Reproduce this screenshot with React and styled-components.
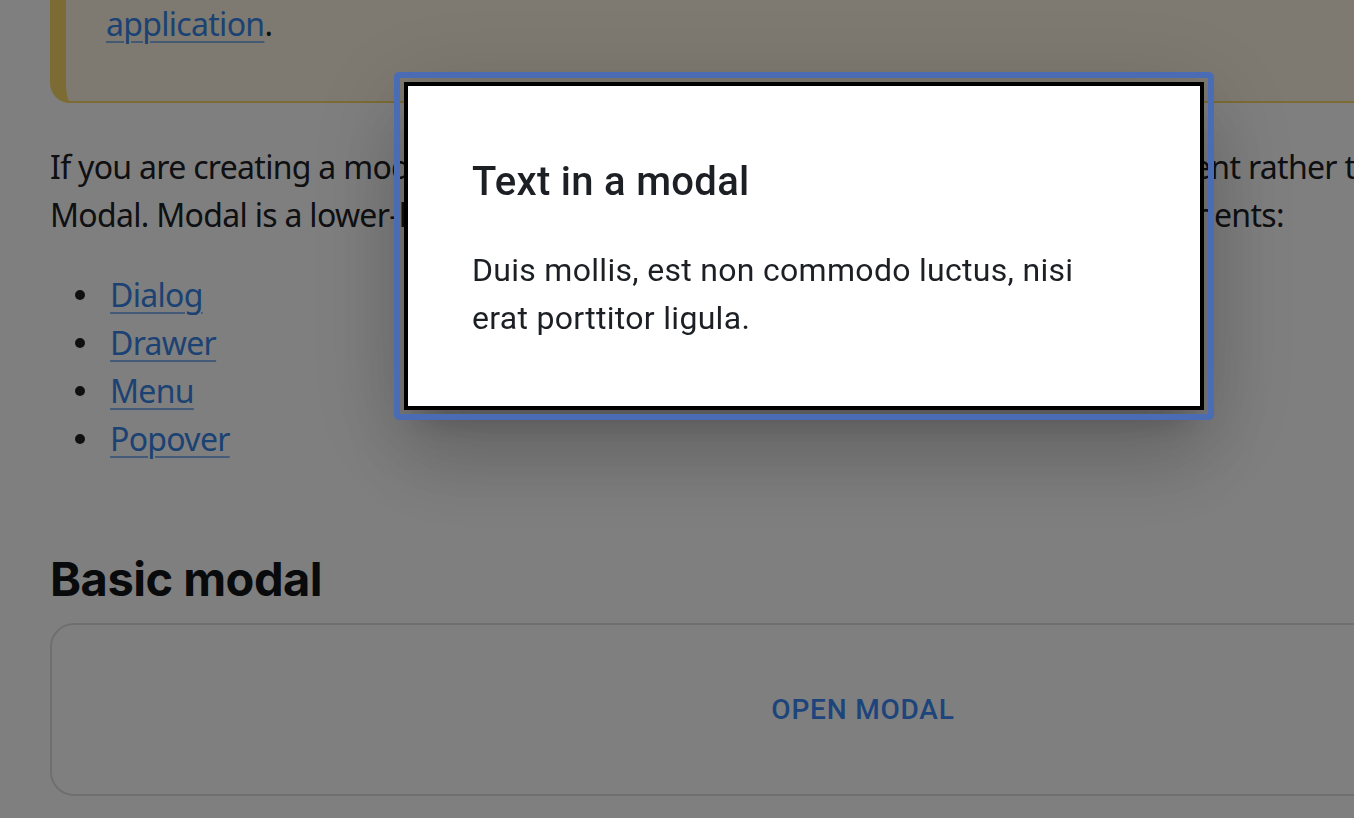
import React from 'react';
import styled, { createGlobalStyle } from 'styled-components';

const GlobalStyle = createGlobalStyle`
  html, body {
    margin: 0;
    padding: 0;
    background: #ffffff;
    overflow: hidden;
  }
  body {
    font-family: "Noto Sans", "Open Sans", sans-serif;
    color: #1c2025;
  }
`;

const Page = styled.main`
  width: 1626px;
  padding: 0 0 0 50px;
  box-sizing: content-box;
`;

const Callout = styled.aside`
  margin: -122px 0 40px;
  padding: 24px 40px 53px 40px;
  background: #fdf5e2;
  border: 2px solid #f8d866;
  border-left-width: 16px;
  border-radius: 20px;
  font-size: 32px;
  line-height: 48px;
  letter-spacing: -0.7px;
  white-space: nowrap;
  overflow: hidden;
`;

const Paragraph = styled.p`
  margin: 0;
  font-size: 32px;
  line-height: 48px;
  letter-spacing: -0.7px;
  white-space: nowrap;
`;

const TextLink = styled.a`
  color: #3785e6;
  text-decoration: underline;
  text-decoration-thickness: 2px;
  text-underline-offset: 5px;
  text-decoration-color: rgba(55, 133, 230, 0.6);
`;

const List = styled.ul`
  margin: 32px 0 0;
  padding-left: 60px;
  list-style: none;
  font-size: 32px;
  line-height: 48px;
  letter-spacing: -0.7px;
`;

const Item = styled.li`
  display: flex;
  align-items: center;

  &::before {
    content: '';
    width: 10px;
    height: 10px;
    border-radius: 50%;
    background: #1c2025;
    margin: 0 25px 0 -35px;
  }
`;

const Heading = styled.h2`
  margin: 80px 0 8px;
  font-family: Inter, "Noto Sans", sans-serif;
  font-weight: 700;
  font-size: 47px;
  line-height: 72px;
  letter-spacing: -0.5px;
  color: #101418;
`;

const Demo = styled.div`
  border: 2px solid #dedede;
  border-radius: 24px;
  padding: 48px;
  display: flex;
  justify-content: center;
`;

const TextButton = styled.button`
  border: none;
  background: none;
  padding: 12px 16px;
  font-family: Roboto, sans-serif;
  font-weight: 500;
  font-size: 28px;
  line-height: 49px;
  letter-spacing: 0.8px;
  text-transform: uppercase;
  color: #3a8af8;
  cursor: pointer;
`;

const Backdrop = styled.div`
  position: fixed;
  inset: 0;
  background: rgba(0, 0, 0, 0.5);
`;

const ModalBox = styled.div`
  position: fixed;
  left: 404px;
  top: 82px;
  width: 800px;
  box-sizing: border-box;
  padding: 64px;
  background: #ffffff;
  border: 4px solid #000000;
  font-family: Roboto, sans-serif;
  color: #1c2025;
  box-shadow: 0 22px 30px -14px rgba(0, 0, 0, 0.2),
    0 48px 76px 6px rgba(0, 0, 0, 0.14),
    0 18px 92px 16px rgba(0, 0, 0, 0.12);

  &::after {
    content: '';
    position: absolute;
    inset: -14px;
    border: 6px solid #4a6cb4;
    border-radius: 5px;
    pointer-events: none;
  }
`;

const ModalTitle = styled.h2`
  margin: 0;
  font-size: 40px;
  font-weight: 500;
  line-height: 64px;
  letter-spacing: 0.3px;
`;

const ModalText = styled.p`
  margin: 32px 0 0;
  font-size: 32px;
  font-weight: 400;
  line-height: 48px;
  letter-spacing: 0.3px;
  max-width: 620px;
`;

const links = ['Dialog', 'Drawer', 'Menu', 'Popover'];

export default function App() {
  return (
    <>
      <GlobalStyle />
      <Page>
        <Callout>
          The term "modal" is sometimes used to mean "dialog", but this is a misnomer.
          <br />
          A modal window describes parts of a UI. An element is considered modal if{' '}
          <TextLink href="#">
            it blocks interaction with the rest of the
            <br />
            application
          </TextLink>
          .
        </Callout>
        <Paragraph>
          If you are creating a modal dialog, you probably want to use the{' '}
          <TextLink href="#">Dialog</TextLink> component rather than directly using
          <br />
          Modal. Modal is a lower-level construct that is leveraged by the following components:
        </Paragraph>
        <List>
          {links.map((name) => (
            <Item key={name}>
              <TextLink href="#">{name}</TextLink>
            </Item>
          ))}
        </List>
        <Heading>Basic modal</Heading>
        <Demo>
          <TextButton>Open modal</TextButton>
        </Demo>
      </Page>
      <Backdrop />
      <ModalBox role="dialog" aria-labelledby="modal-title">
        <ModalTitle id="modal-title">Text in a modal</ModalTitle>
        <ModalText>Duis mollis, est non commodo luctus, nisi erat porttitor ligula.</ModalText>
      </ModalBox>
    </>
  );
}
